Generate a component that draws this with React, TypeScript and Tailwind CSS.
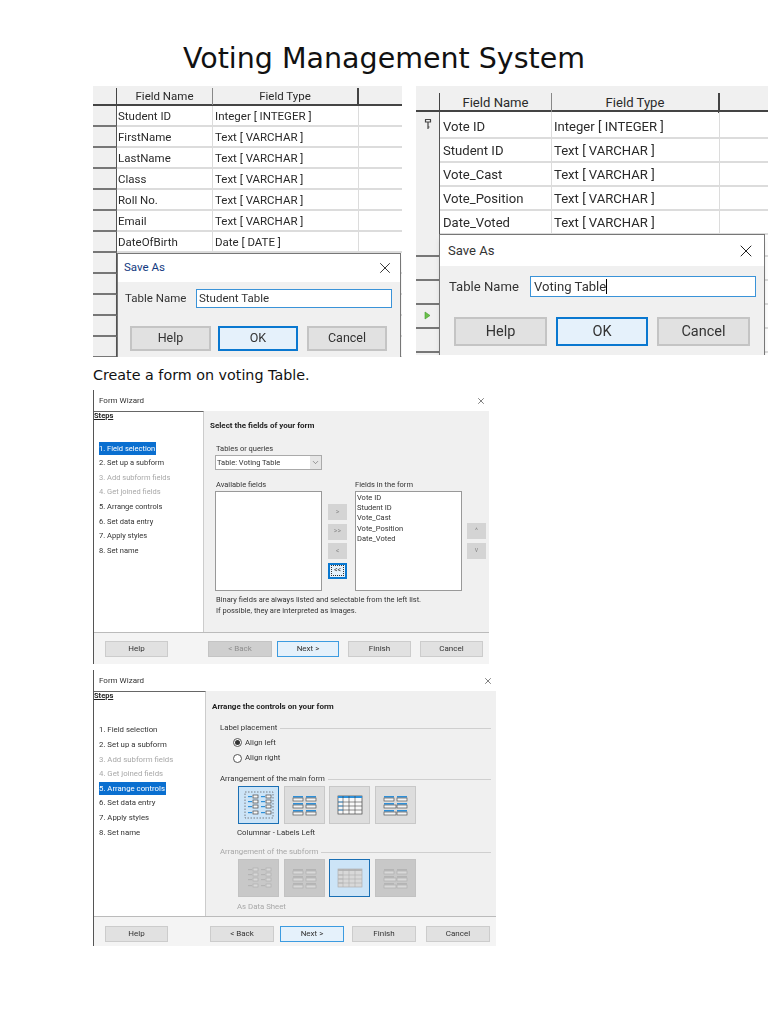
import type { ReactNode } from 'react'
import { X, ChevronDown } from 'lucide-react'

const SHOT = "font-['Roboto','Noto_Sans',sans-serif]"

const studentRows = [
  ['Student ID', 'Integer [ INTEGER ]'],
  ['FirstName', 'Text [ VARCHAR ]'],
  ['LastName', 'Text [ VARCHAR ]'],
  ['Class', 'Text [ VARCHAR ]'],
  ['Roll No.', 'Text [ VARCHAR ]'],
  ['Email', 'Text [ VARCHAR ]'],
  ['DateOfBirth', 'Date [ DATE ]'],
]

const voteRows = [
  ['Vote ID', 'Integer [ INTEGER ]'],
  ['Student ID', 'Text [ VARCHAR ]'],
  ['Vote_Cast', 'Text [ VARCHAR ]'],
  ['Vote_Position', 'Text [ VARCHAR ]'],
  ['Date_Voted', 'Text [ VARCHAR ]'],
]

const steps = [
  '1. Field selection',
  '2. Set up a subform',
  '3. Add subform fields',
  '4. Get joined fields',
  '5. Arrange controls',
  '6. Set data entry',
  '7. Apply styles',
  '8. Set name',
]

function KeyIcon() {
  return (
    <svg width="8" height="12" viewBox="0 0 8 12" fill="none" stroke="#444" strokeWidth="1.2">
      <path d="M1 1.5h6M1.5 1.5v2.5h5V1.5M4 4v7M4 9h1.5" />
    </svg>
  )
}

function PlayIcon() {
  return (
    <svg width="7" height="9" viewBox="0 0 7 9">
      <path d="M1 1l5 3.5L1 8z" fill="#6cc04a" stroke="#3f9a2c" strokeWidth="0.6" />
    </svg>
  )
}

interface FieldTableProps {
  cols: string
  topPad: string
  headH: string
  rowH: string
  cellPad: string
  nameInset: string
  textSize: string
  rows: string[][]
  total: number
  gutter?: Record<number, ReactNode>
}

function FieldTable({ cols, topPad, headH, rowH, cellPad, nameInset, textSize, rows, total, gutter = {} }: FieldTableProps) {
  const blanks = Array.from({ length: total }, (_, i) => rows[i] ?? ['', ''])
  return (
    <div className={`${textSize} text-[#2a2a2a]`}>
      <div className={`bg-[#f0f0f0] ${topPad}`}>
        <div className={`grid ${cols} ${headH} border-b-2 border-[#444]`}>
          <div className="border-r border-[#444]" />
          <div className="flex items-center justify-center border-r border-[#888]">Field Name</div>
          <div className="flex items-center justify-center border-r-2 border-[#444]">Field Type</div>
          <div />
        </div>
      </div>
      {blanks.map((row, i) => (
        <div key={i} className={`grid ${cols} ${rowH}`}>
          <div className="flex items-center justify-center bg-[#f0f0f0] border-r border-b-2 border-r-[#555] border-b-[#777]">
            {gutter[i]}
          </div>
          <div className={`flex items-center ${nameInset} ${cellPad} border-r border-b-2 border-[#dcdcdc] whitespace-nowrap`}>{row[0]}</div>
          <div className={`flex items-center pl-[2px] ${cellPad} border-r border-b-2 border-[#dcdcdc] whitespace-nowrap`}>{row[1]}</div>
          <div className="border-b-2 border-[#dcdcdc]" />
        </div>
      ))}
    </div>
  )
}

function SaveAsButton({ label, active, className }: { label: string; active?: boolean; className: string }) {
  return (
    <div
      className={`flex items-center justify-center ${className} ${
        active ? 'bg-[#e5f1fb] border-2 border-[#0a78d0]' : 'bg-[#e1e1e1] border-2 border-[#c4c4c4]'
      }`}
    >
      {label}
    </div>
  )
}

export default function App() {
  return (
    <div className="w-[768px] h-[1024px] bg-white overflow-hidden font-['DejaVu_Sans',sans-serif] text-[#111]">
      <h1 className="text-center text-[28.5px] leading-[34px] pt-[42px] pb-[10px]">Voting Management System</h1>

      <div className={`flex items-start gap-[14px] pl-[93px] blur-[0.25px] ${SHOT}`}>
        {/* Student table */}
        <div className="relative w-[309px] h-[271px] overflow-hidden">
          <FieldTable
            cols="grid-cols-[24px_96px_146px_43px]"
            topPad="pt-0"
            headH="h-[20px] pt-[2px]"
            rowH="h-[21px]"
            cellPad="pt-[2px]"
            nameInset="pl-[1px]"
            textSize="text-[11.5px]"
            rows={studentRows}
            total={12}
          />
          <div className="absolute left-[24px] top-[167px] w-[284px] h-[110px] bg-[#f0f0f0] border border-[#777] shadow-md text-[#333] text-[11.5px]">
            <div className="h-[28px] bg-white flex items-center justify-between pl-[6px] pr-[6px] text-[#123a80]">
              Save As
              <X size={18} strokeWidth={1.2} className="text-[#222]" />
            </div>
            <div className="flex items-center pl-[7px] mt-[7px] h-[19px]">
              <span className="w-[71px] whitespace-nowrap">Table Name</span>
              <div className="w-[196px] h-[19px] bg-white border border-[#3a93d8] flex items-center pl-[2px]">Student Table</div>
            </div>
            <div className="flex gap-[7px] pl-[12px] mt-[18px] text-[12.5px]">
              <SaveAsButton label="Help" className="w-[81px] h-[25px]" />
              <SaveAsButton label="OK" active className="w-[80px] h-[25px]" />
              <SaveAsButton label="Cancel" className="w-[80px] h-[25px] ml-[2px]" />
            </div>
          </div>
        </div>

        {/* Vote table */}
        <div className="relative w-[352px] h-[269px] overflow-hidden">
          <FieldTable
            cols="grid-cols-[24px_112px_168px_48px]"
            topPad="pt-[6px]"
            headH="h-[20px] pt-[1px]"
            rowH="h-[24.1px]"
            cellPad="pt-[5px]"
            nameInset="pl-[3px]"
            textSize="text-[13.1px]"
            rows={voteRows}
            total={11}
            gutter={{ 0: <KeyIcon />, 8: <PlayIcon /> }}
          />
          <div className="absolute left-[23px] top-[148px] w-[326px] h-[127px] bg-[#f0f0f0] border border-[#777] shadow-md text-[#333] text-[13.1px]">
            <div className="h-[31px] bg-white flex items-center justify-between pl-[8px] pr-[8px]">
              Save As
              <X size={20} strokeWidth={1.2} className="text-[#222]" />
            </div>
            <div className="flex items-center pl-[9px] mt-[10px] h-[21px]">
              <span className="w-[81px] whitespace-nowrap">Table Name</span>
              <div className="w-[226px] h-[21px] bg-white border border-[#3a93d8] flex items-center pl-[3px]">
                Voting Table<span className="w-px h-[15px] bg-black" />
              </div>
            </div>
            <div className="flex gap-[9px] pl-[14px] mt-[20px] text-[14.5px]">
              <SaveAsButton label="Help" className="w-[93px] h-[29px]" />
              <SaveAsButton label="OK" active className="w-[92px] h-[29px]" />
              <SaveAsButton label="Cancel" className="w-[93px] h-[29px]" />
            </div>
          </div>
        </div>
      </div>

      <p className="pl-[93px] mt-[9px] text-[14.3px] leading-[18px]">Create a form on voting Table.</p>

      <div className={`pl-[93px] mt-[6px] ${SHOT}`}>
        <FieldsWizard />
      </div>
      <div className={`pl-[93px] mt-[6px] ${SHOT}`}>
        <ControlsWizard />
      </div>
    </div>
  )
}

interface WizardProps {
  width: string
  bodyH: string
  sideW: string
  stepsTop: string
  textSize: string
  activeStep: number
  footer: ReactNode
  children: ReactNode
}

function Wizard({ width, bodyH, sideW, stepsTop, textSize, activeStep, footer, children }: WizardProps) {
  return (
    <div className={`${width} border-l border-[#555] ${textSize} text-[#333] blur-[0.35px]`}>
      <div className="h-[21px] flex items-center justify-between pl-[5px] pr-[3px] bg-white text-[8px]">
        Form Wizard
        <X size={10} strokeWidth={1.5} className="text-[#333]" />
      </div>
      <div className={`flex ${bodyH} bg-[#f0f0f0] border-b border-[#bbb]`}>
        <div className={`${sideW} shrink-0 bg-white border-t border-[#666] border-r border-r-[#ccc]`}>
          <div className="font-bold underline leading-[7px] text-[7.5px] text-[#222]">Steps</div>
          <div className={`${stepsTop} pl-[5px] flex flex-col`}>
            {steps.map((s, i) => (
              <div key={s} className="h-[14.6px] flex items-center">
                <span
                  className={
                    i === activeStep
                      ? 'bg-[#0a6fd0] text-white pr-[1px] leading-[13px]'
                      : i === 2 || i === 3
                        ? 'text-[#a8a8a8]'
                        : ''
                  }
                >
                  {s}
                </span>
              </div>
            ))}
          </div>
        </div>
        <div className="flex-1 min-w-0">{children}</div>
      </div>
      {footer}
    </div>
  )
}

function WizBtn({ label, kind = 'normal', className }: { label: string; kind?: 'normal' | 'next' | 'off'; className: string }) {
  const look =
    kind === 'next'
      ? 'bg-[#e5f1fb] border-[#3c9be0]'
      : kind === 'off'
        ? 'bg-[#cfcfcf] border-[#c4c4c4] text-[#8f8f8f]'
        : 'bg-[#e1e1e1] border-[#cccccc]'
  return <div className={`h-[16px] flex items-center justify-center border text-[8px] ${look} ${className}`}>{label}</div>
}

function ArrowBtn({ label, focus }: { label: string; focus?: boolean }) {
  return (
    <div
      className={`w-[19px] h-[16px] flex items-center justify-center text-[7px] ${
        focus ? 'bg-[#e5f1fb] border-2 border-[#0a78d0] text-[#333]' : 'bg-[#d4d4d4] text-[#8c8c8c]'
      }`}
    >
      {focus ? <span className="border border-dotted border-[#333] px-[2px] leading-[9px]">{label}</span> : label}
    </div>
  )
}

function FieldsWizard() {
  return (
    <Wizard
      width="w-[396px]"
      bodyH="h-[222px]"
      sideW="w-[110px]"
      stepsTop="mt-[22px]"
      textSize="text-[7.5px]"
      activeStep={0}
      footer={
        <div className="h-[31px] bg-[#f4f4f4] flex items-start pt-[8px] pl-[11px]">
          <WizBtn label="Help" className="w-[63px]" />
          <WizBtn label="< Back" kind="off" className="w-[64px] ml-[40px]" />
          <WizBtn label="Next >" kind="next" className="w-[62px] ml-[5px]" />
          <WizBtn label="Finish" className="w-[63px] ml-[9px]" />
          <WizBtn label="Cancel" className="w-[63px] ml-[9px]" />
        </div>
      }
    >
      <div className="pl-[6px] pt-[10px]">
        <div className="font-bold text-[8px] text-[#222] leading-[10px]">Select the fields of your form</div>
        <div className="ml-[6px] mt-[13px] leading-[9px]">Tables or queries</div>
        <div className="ml-[5px] mt-[2px] w-[107px] h-[15px] bg-white border border-[#aaa] flex items-center justify-between pl-[1px]">
          Table: Voting Table
          <span className="w-[11px] h-[13px] bg-[#e6e6e6] flex items-center justify-center">
            <ChevronDown size={9} strokeWidth={1.5} className="text-[#555]" />
          </span>
        </div>
        <div className="grid grid-cols-[107px_19px_107px_20px] gap-x-[6px] ml-[5px] mt-[9px]">
          <div className="leading-[12px] ml-[1px]">Available fields</div>
          <div />
          <div className="leading-[12px] ml-[2px]">Fields in the form</div>
          <div />
          <div className="h-[100px] bg-white border border-[#999]" />
          <div className="flex flex-col gap-[3.6px] mt-[13px]">
            <ArrowBtn label=">" />
            <ArrowBtn label=">>" />
            <ArrowBtn label="<" />
            <ArrowBtn label="<<" focus />
          </div>
          <div className="ml-[2px] h-[100px] w-[107px] bg-white border border-[#999] pl-[1px] pt-[1px] leading-[10.2px]">
            <div>Vote ID</div>
            <div>Student ID</div>
            <div>Vote_Cast</div>
            <div>Vote_Position</div>
            <div>Date_Voted</div>
          </div>
          <div className="flex flex-col gap-[3.6px] mt-[32px] ml-[1px]">
            <ArrowBtn label="^" />
            <ArrowBtn label="v" />
          </div>
        </div>
        <div className="ml-[6px] mt-[3px] leading-[11px]">
          <div>Binary fields are always listed and selectable from the left list.</div>
          <div>If possible, they are interpreted as images.</div>
        </div>
      </div>
    </Wizard>
  )
}

function Legend({ label, dim }: { label: string; dim?: boolean }) {
  return (
    <div className={`flex items-center gap-[3px] ml-[8px] leading-[10px] ${dim ? 'text-[#a8a8a8]' : ''}`}>
      <span className="whitespace-nowrap">{label}</span>
      <span className="flex-1 h-px bg-[#cfcfcf]" />
    </div>
  )
}

function Pills({ y, wide = false, dim }: { y: number; wide?: boolean; dim: boolean }) {
  const blue = dim ? '#b4b4b4' : '#2d8fd8'
  const line = dim ? '#b0b0b0' : '#555'
  const fill = dim ? '#d8d8d8' : '#f4f4f4'
  return (
    <>
      <rect x="8" y={y} width="10" height="1.6" fill={blue} />
      <rect x="8" y={y + 2} width={wide ? 12 : 10} height="3" fill={fill} stroke={line} strokeWidth="0.7" />
      <rect x="21" y={y} width="10" height="1.6" fill={blue} />
      <rect x="21" y={y + 2} width="10" height="3" fill={fill} stroke={line} strokeWidth="0.7" />
    </>
  )
}

function LayoutThumb({ kind, dim = false }: { kind: 'columnar' | 'stacked' | 'sheet' | 'mixed'; dim?: boolean }) {
  const blue = dim ? '#b4b4b4' : '#2d8fd8'
  const line = dim ? '#b0b0b0' : '#444'
  const fill = dim ? '#d8d8d8' : '#f8f8f8'
  return (
    <svg width="39" height="36" viewBox="0 0 39 36">
      {kind === 'columnar' && (
        <>
          {!dim && <rect x="6" y="5" width="28" height="26" fill="none" stroke="#555" strokeWidth="0.7" strokeDasharray="1.5 1.5" />}
          {[8, 13, 18, 24].map((y) => (
            <g key={y}>
              <rect x="9" y={y + 1} width="4" height="1.2" fill={blue} />
              <rect x="14" y={y} width="5" height="3" fill={fill} stroke={line} strokeWidth="0.7" />
              <rect x="22" y={y + 1} width="4" height="1.2" fill={blue} />
              <rect x="27" y={y} width="5" height="3" fill={fill} stroke={line} strokeWidth="0.7" />
            </g>
          ))}
        </>
      )}
      {kind === 'stacked' && [9, 16, 23].map((y) => <Pills key={y} y={y} dim={dim} />)}
      {kind === 'mixed' && [9, 16, 23].map((y) => <Pills key={y} y={y} wide={y !== 9} dim={dim} />)}
      {kind === 'sheet' && (
        <>
          <rect x="8" y="9" width="24" height="18" fill={fill} stroke={line} strokeWidth="0.7" />
          <rect x="8" y="9" width="24" height="2" fill={blue} />
          <path d="M8 15h24M8 19h24M8 23h24M13 9v18M19 9v18M25 9v18" stroke={line} strokeWidth="0.6" />
          <path d="M8 15h5M8 19h5M8 23h5" stroke={blue} strokeWidth="0.8" />
        </>
      )}
    </svg>
  )
}

function Thumb({ kind, active, dim }: { kind: 'columnar' | 'stacked' | 'sheet' | 'mixed'; active?: boolean; dim?: boolean }) {
  const tone = active
    ? 'bg-[#cce4f7] border-[#1a6fb4]'
    : dim
      ? 'bg-[#c8c8c8] border-[#c2c2c2]'
      : 'bg-[#dddddd] border-[#c8c8c8]'
  return (
    <div className={`w-[41px] h-[38px] flex items-center justify-center border ${tone}`}>
      <LayoutThumb kind={kind} dim={dim} />
    </div>
  )
}

function Radio({ on, label }: { on?: boolean; label: string }) {
  return (
    <div className="flex items-center gap-[3px] h-[15.5px] ml-[21px]">
      <span className="w-[9px] h-[9px] rounded-full border border-[#555] bg-white flex items-center justify-center">
        {on && <span className="w-[5px] h-[5px] rounded-full bg-[#333]" />}
      </span>
      {label}
    </div>
  )
}

function ControlsWizard() {
  return (
    <Wizard
      width="w-[403px]"
      bodyH="h-[226px]"
      sideW="w-[112px]"
      stepsTop="mt-[24px]"
      textSize="text-[7.8px]"
      activeStep={4}
      footer={
        <div className="h-[29px] bg-[#f4f4f4] flex items-start pt-[9px] pl-[11px]">
          <WizBtn label="Help" className="w-[63px]" />
          <WizBtn label="< Back" className="w-[64px] ml-[42px]" />
          <WizBtn label="Next >" kind="next" className="w-[64px] ml-[6px]" />
          <WizBtn label="Finish" className="w-[64px] ml-[8px]" />
          <WizBtn label="Cancel" className="w-[64px] ml-[10px]" />
        </div>
      }
    >
      <div className="pl-[6px] pr-[5px] pt-[11px]">
        <div className="font-bold text-[8px] text-[#222] leading-[10px]">Arrange the controls on your form</div>
        <div className="mt-[11px]">
          <Legend label="Label placement" />
        </div>
        <div className="mt-[2px]">
          <Radio on label="Align left" />
          <Radio label="Align right" />
        </div>
        <div className="mt-[8px]">
          <Legend label="Arrangement of the main form" />
        </div>
        <div className="flex gap-[4.5px] ml-[26px] mt-[2px]">
          <Thumb kind="columnar" active />
          <Thumb kind="stacked" />
          <Thumb kind="sheet" />
          <Thumb kind="mixed" />
        </div>
        <div className="ml-[25px] mt-[4px] leading-[10px]">Columnar - Labels Left</div>
        <div className="mt-[9px]">
          <Legend label="Arrangement of the subform" dim />
        </div>
        <div className="flex gap-[4.5px] ml-[26px] mt-[2px]">
          <Thumb kind="columnar" dim />
          <Thumb kind="stacked" dim />
          <Thumb kind="sheet" active dim />
          <Thumb kind="mixed" dim />
        </div>
        <div className="ml-[25px] mt-[5px] leading-[10px] text-[#a8a8a8]">As Data Sheet</div>
      </div>
    </Wizard>
  )
}
